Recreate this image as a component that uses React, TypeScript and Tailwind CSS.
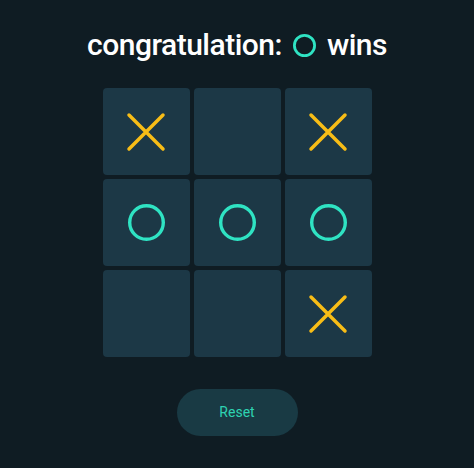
const board: ("X" | "O" | null)[] = ["X", null, "X", "O", "O", "O", null, null, "X"];

function Cross() {
  return (
    <svg width="40" height="40" viewBox="0 0 40 40" fill="none">
      <path d="M3 3L37 37M37 3L3 37" stroke="#f8bd16" strokeWidth="3.5" strokeLinecap="round" />
    </svg>
  );
}

function Ring({ size = 37, stroke = 3.4 }: { size?: number; stroke?: number }) {
  const r = size / 2 - stroke / 2;
  return (
    <svg width={size} height={size} viewBox={`0 0 ${size} ${size}`} fill="none">
      <circle cx={size / 2} cy={size / 2} r={r} stroke="#2fe3c3" strokeWidth={stroke} />
    </svg>
  );
}

export default function App() {
  return (
    <div className="w-[474px] h-[468px] bg-[#0f1c23] flex flex-col items-center font-['Roboto',sans-serif]">
      <h1 className="mt-[26px] flex items-center gap-[11px] text-[30px] leading-[38px] font-medium text-white tracking-[-0.5px]">
        <span>congratulation:</span>
        <Ring size={23} stroke={2.8} />
        <span>wins</span>
      </h1>

      <div className="mt-[24px] grid grid-cols-[repeat(3,87px)] grid-rows-[repeat(3,87px)] gap-[4px]">
        {board.map((cell, i) => (
          <div key={i} className="rounded-[4px] bg-[#1c3846] flex items-center justify-center">
            {cell === "X" && <Cross />}
            {cell === "O" && <Ring />}
          </div>
        ))}
      </div>

      <button className="mt-[32px] w-[121px] h-[47px] rounded-full bg-[#193a44] text-[#2ed3b2] text-[14px]">
        Reset
      </button>
    </div>
  );
}
